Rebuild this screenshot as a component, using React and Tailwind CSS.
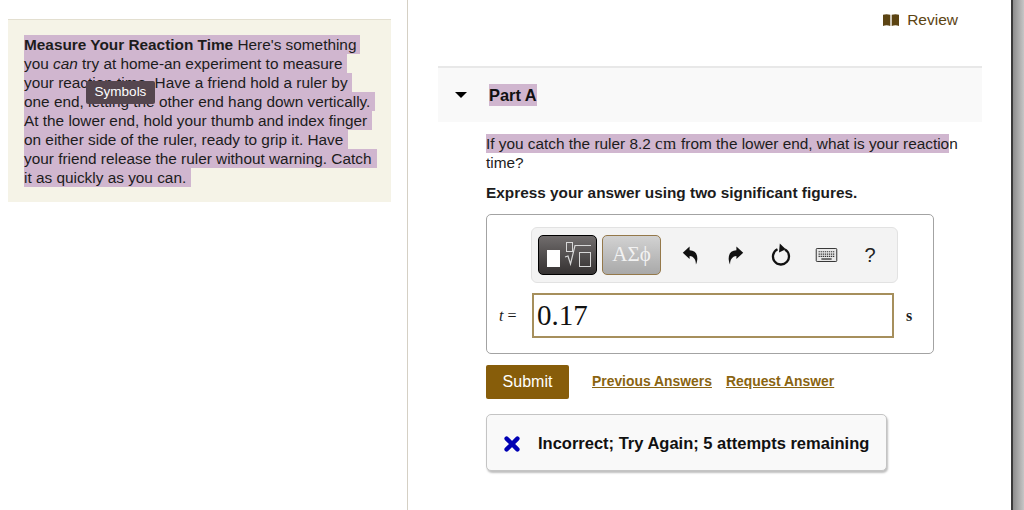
const sans = { fontFamily: '"Liberation Sans", Arial, sans-serif' };

const problemLines = [
    [<><b>Measure Your Reaction Time</b> Here's something</>, 'w-[336px]'],
    [<>you <i>can</i> try at home-an experiment to measure</>, 'w-[323px]'],
    [<>your reaction time. Have a friend hold a ruler by</>, 'w-[328px]'],
    [<>one end, letting the other end hang down vertically.</>, 'w-[351px]'],
    [<>At the lower end, hold your thumb and index finger</>, 'w-[348px]'],
    [<>on either side of the ruler, ready to grip it. Have</>, 'w-[324px]'],
    [<>your friend release the ruler without warning. Catch</>, 'w-[353px]'],
    [<>it as quickly as you can.</>, 'w-[167px]'],
];

function BookIcon() {
    return (
        <svg width="16" height="12" viewBox="0 0 16 12" fill="#5c4413">
            <path d="M0 .8 C2 0 5 0 7.3 .8 V12 C5 11 2 11 0 12 Z" />
            <path d="M8.7 .8 C11 0 14 0 16 .8 V12 C14 11 11 11 8.7 12 Z" />
        </svg>
    );
}

function TemplatesIcon() {
    return (
        <svg width="46" height="32" viewBox="0 0 46 32" fill="none">
            <rect x="2" y="11" width="13" height="17" fill="#fff" />
            <rect x="21.5" y="3.5" width="6" height="9" stroke="#d8d8d8" strokeWidth="1" />
            <path d="M20 18 L23 17 L25.5 25 L30 6.5 H46" stroke="#d8d8d8" strokeWidth="1.2" />
            <rect x="34.5" y="13.5" width="11" height="14" stroke="#d8d8d8" strokeWidth="1" />
        </svg>
    );
}

function UndoIcon({ flip }) {
    return (
        <svg width="17" height="19" viewBox="0 0 17 21" fill="#111" className={flip ? '-scale-x-100' : ''}>
            <path d="M0 7.5 L7.5 0.5 V4.8 C13.5 5 16.5 9 16 15 C15.8 17 15.2 19 14.5 20.5 C14.6 15.5 12.5 11.5 7.5 11 V14.5 Z" />
        </svg>
    );
}

function ResetIcon() {
    return (
        <svg width="20" height="24" viewBox="0 0 20 24" fill="none">
            <path d="M6.5 6.3 A8 8 0 1 0 14 6.6" stroke="#111" strokeWidth="2.3" />
            <path d="M8.8 0.5 L14.8 6.3 L8 9.5 Z" fill="#111" />
        </svg>
    );
}

function KeyboardIcon() {
    return (
        <svg width="23" height="14" viewBox="0 0 23 15" fill="none">
            <rect x=".5" y=".5" width="22" height="14" rx="1" fill="#e8e8e8" stroke="#222" />
            <path d="M3 4 H20 M3 6.5 H20 M3 9 H20" stroke="#333" strokeWidth="1.2" strokeDasharray="1.4 .8" />
            <path d="M6 11.8 H17" stroke="#333" strokeWidth="1.4" />
        </svg>
    );
}

function CrossIcon() {
    return (
        <svg width="16" height="16" viewBox="0 0 16 16">
            <path d="M2.6 2.6 L13.4 13.4 M13.4 2.6 L2.6 13.4" stroke="#0000b4" strokeWidth="4.4" strokeLinecap="round" />
        </svg>
    );
}

export default function App() {
    return (
        <div className="relative flex h-[510px] w-[1024px] overflow-hidden bg-white text-[15.36px] text-[#1c1c1c]" style={sans}>
            {/* Left column: problem intro */}
            <div className="h-full w-[408px] shrink-0 border-r border-[#d5d0c4] pl-2 pr-4 pt-[19px]">
                <div className="relative h-[183px] w-[383px] border-t border-[#e3dfd0] bg-[#f5f3e7] pl-4 pt-[15px]">
                    {problemLines.map(([line, width], i) => (
                        <div key={i} className={`h-[19px] whitespace-nowrap bg-[#d0b6cf] leading-[19px] ${width}`}>{line}</div>
                    ))}
                    <div className="absolute left-[78px] top-[61px] flex h-[23px] w-[69px] items-center justify-center rounded-[2px] bg-[#55464f] text-[13.5px] text-white">
                        Symbols
                    </div>
                </div>
            </div>

            {/* Right column: question */}
            <div className="flex h-full w-[603px] shrink-0 flex-col pl-[30px]">
                <div className="flex h-[66px] w-[544px] justify-end pr-[24px] pt-[11px]">
                    <a className="flex h-[18px] items-center gap-2 text-[15.5px] text-[#5c4413]"><BookIcon />Review</a>
                </div>

                <div className="flex h-[56px] w-[544px] items-center border-t-2 border-[#e8e8e8] bg-[#f9f9f9] pl-[17px]">
                    <div className="h-0 w-0 border-x-[6px] border-t-[6px] border-x-transparent border-t-black" />
                    <span className="ml-[22px] bg-[#d0b6cf] text-[16.4px] font-bold leading-[22px] text-[#111]">Part A</span>
                </div>

                <div className="flex flex-col pl-[48px] pt-[12px]">
                    <p className="leading-[19px]">
                        <span className="bg-[#d0b6cf] py-[1px]">If you catch the ruler 8.2 <span className="font-['Liberation_Serif'] text-[17px] tracking-[0.5px]">cm</span> from the lower end, what is your reactio</span>n
                        <br />time?
                    </p>
                    <p className="mt-[11px] font-bold leading-[19px]">Express your answer using two significant figures.</p>

                    {/* Answer box */}
                    <div className="mt-[12px] h-[140px] w-[448px] rounded-[5px] border border-[#a3a3a3] pl-[44px] pt-[12px]">
                        <div className="flex h-[56px] w-[367px] items-center gap-[5px] rounded-[6px] border border-[#e2e2e2] bg-[#f3f3f3] pl-[6px]">
                            <div className="flex h-[40px] w-[59px] items-center justify-center rounded-[5px] border border-black bg-gradient-to-b from-[#716d6d] to-[#353232]">
                                <TemplatesIcon />
                            </div>
                            <div className="flex h-[40px] w-[59px] items-center justify-center rounded-[5px] border border-[#94784a] bg-gradient-to-b from-[#d2d2d2] to-[#a9a9a9] font-['Liberation_Serif'] text-[21px] text-[#f2f2f2]">
                                ΑΣϕ
                            </div>
                            <div className="ml-[11px] flex w-[27px] justify-center"><UndoIcon /></div>
                            <div className="ml-[13px] flex w-[27px] justify-center"><UndoIcon flip /></div>
                            <div className="ml-[13px] flex w-[27px] justify-center"><ResetIcon /></div>
                            <div className="ml-[13px] flex w-[29px] justify-center"><KeyboardIcon /></div>
                            <div className="ml-[13px] w-[22px] text-center text-[20px] text-[#222]">?</div>
                        </div>

                        <div className="ml-[-32px] mt-[10px] flex items-center">
                            <span className="w-[33px] font-['Liberation_Serif'] text-[16px]"><i>t</i> =</span>
                            <div className="flex h-[45px] w-[362px] items-center border-2 border-[#a68f5c] bg-white pl-[3px] font-['Liberation_Serif'] text-[29px] text-[#111]">
                                0.17
                            </div>
                            <span className="ml-[12px] font-['Liberation_Serif'] text-[16px] font-bold">s</span>
                        </div>
                    </div>

                    <div className="mt-[11px] flex items-start">
                        <button className="flex h-[34px] w-[83px] items-center justify-center rounded-[2px] bg-[#875d0a] text-[16px] text-white">Submit</button>
                        <a className="ml-[23px] mt-[8px] text-[13.9px] font-bold leading-[16px] text-[#8a6410] underline">Previous Answers</a>
                        <a className="ml-[14px] mt-[8px] text-[13.9px] font-bold leading-[16px] text-[#8a6410] underline">Request Answer</a>
                    </div>

                    <div className="mt-[15px] flex h-[57px] w-[401px] items-center rounded-[5px] border border-[#c4c4c4] bg-[#f9f9f9] pl-[17px] pt-[2px] shadow-[1px_2px_2px_rgba(0,0,0,0.25)]">
                        <CrossIcon />
                        <span className="ml-[18px] text-[16.5px] font-bold text-[#111]">Incorrect; Try Again; 5 attempts remaining</span>
                    </div>
                </div>
            </div>

            {/* Window edge at the far right */}
            <div className="h-full w-[13px] shrink-0 border-l-2 border-[#3a3a3a] bg-gradient-to-r from-[#8c8c8c] to-[#c6c6c6]" />
        </div>
    );
}
